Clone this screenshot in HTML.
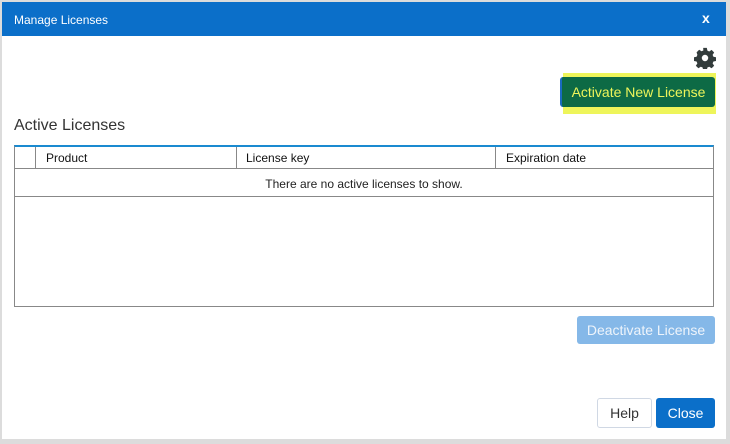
<!DOCTYPE html><html><head><style>
body{margin:0;width:730px;height:444px;background:#dcdcdc;font-family:"Liberation Sans",sans-serif;position:relative;overflow:hidden}
.win{position:absolute;left:2px;top:2px;width:724px;height:437px;background:#fff}
.tb{position:absolute;left:0;top:0;width:724px;height:34px;background:#0b6fc9;color:#fff;font-size:12px}
.a{position:absolute}
.btn{position:absolute;border-radius:3px;font-size:14px;text-align:center;box-sizing:border-box}
th,td{font-size:12px}
</style></head><body>
<div class="win">
<div class="tb"><span class="a" style="left:12px;top:11px">Manage Licenses</span><span class="a" style="left:700px;top:8px;font-weight:bold;font-size:14px">x</span></div>
<svg class="a" style="left:692px;top:45px" width="22" height="22" viewBox="0 0 24 24"><path fill="#333c3c" d="M10 1h4l.6 3 2 .9 2.6-1.7 2.8 2.8-1.7 2.6.9 2 3 .6v4l-3 .6-.9 2 1.7 2.6-2.8 2.8-2.6-1.7-2 .9-.6 3h-4l-.6-3-2-.9-2.6 1.7-2.8-2.8 1.7-2.6-.9-2-3-.6v-4l3-.6.9-2L2.8 5.8 5.6 3l2.6 1.7 2-.9zM12 8.5a3.5 3.5 0 100 7 3.5 3.5 0 000-7z"/></svg>
<div class="a" style="left:561px;top:71px;width:153px;height:41px;background:#eef55a"></div>
<div class="btn" style="left:558px;top:75px;width:155px;height:30px;background:#0d6a45;border-left:2px solid #1a6ac0;color:#eef55a;line-height:30px">Activate New License</div>
<div class="a" style="left:12px;top:115px;font-size:16px;color:#333">Active Licenses</div>
<div class="a" style="left:12px;top:143px;width:698px;height:159px;border:1px solid #888;border-top:2px solid #1a8ad0"></div>
<div class="a" style="left:12px;top:166px;width:700px;height:1px;background:#888"></div>
<div class="a" style="left:12px;top:194px;width:700px;height:1px;background:#888"></div>
<div class="a" style="left:33px;top:145px;width:1px;height:21px;background:#888"></div>
<div class="a" style="left:234px;top:145px;width:1px;height:21px;background:#888"></div>
<div class="a" style="left:493px;top:145px;width:1px;height:21px;background:#888"></div>
<div class="a" style="left:44px;top:149px;font-size:12px;color:#111">Product</div>
<div class="a" style="left:244px;top:149px;font-size:12px;color:#111">License key</div>
<div class="a" style="left:504px;top:149px;font-size:12px;color:#111">Expiration date</div>
<div class="a" style="left:12px;top:175px;width:700px;text-align:center;font-size:12px;color:#222">There are no active licenses to show.</div>
<div class="btn" style="left:575px;top:314px;width:138px;height:28px;background:#85b8e8;color:#eef4fb;line-height:28px">Deactivate License</div>
<div class="btn" style="left:595px;top:396px;width:55px;height:30px;border:1px solid #d0d8e4;color:#333;line-height:28px">Help</div>
<div class="btn" style="left:654px;top:396px;width:59px;height:30px;background:#0b6fc9;color:#fff;line-height:30px">Close</div>
</div>
</body></html>
